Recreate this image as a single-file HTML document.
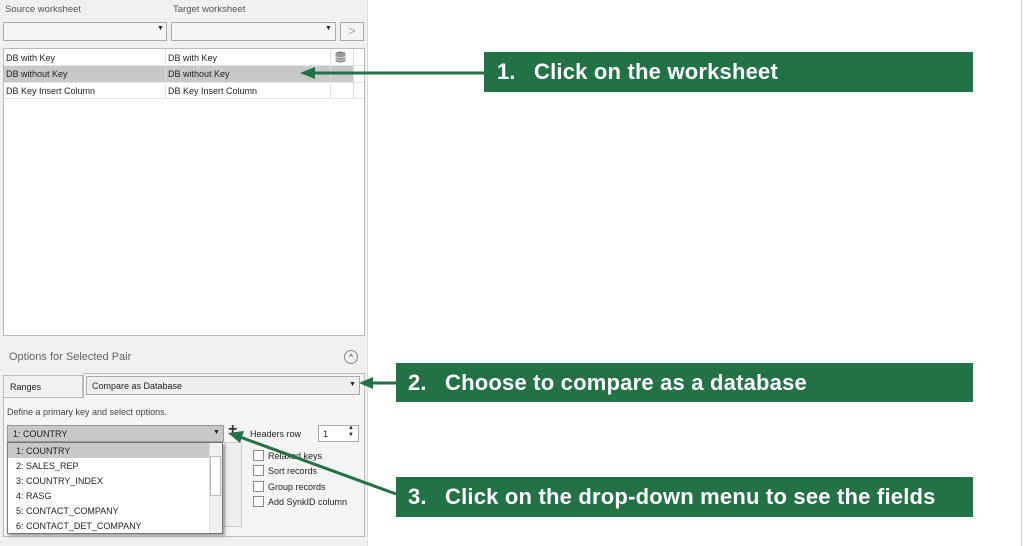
<!DOCTYPE html>
<html><head><style>
*{margin:0;padding:0;box-sizing:border-box}
body{width:1024px;height:546px;background:#fff;font-family:"Liberation Sans",sans-serif;position:relative;overflow:hidden}
.a{position:absolute}
.left{left:0;top:0;width:368px;height:546px;background:#f0f0f0;border-right:1px solid #ddd}
.lbl{font-size:9.5px;color:#555}
.box{border:1px solid #aaa;background:#f4f4f4}
.t{font-size:9px;color:#222;white-space:nowrap}
.g{background:#237245;color:#fff;font-weight:bold;font-size:22px;letter-spacing:0.2px;display:flex;align-items:center;white-space:nowrap}
.g b{display:inline-block;width:37px}
.cb{width:11px;height:11px;border:1px solid #888;background:#fff}
</style></head><body>
<div class="a left"></div>
<div class="a lbl" style="left:5px;top:4px">Source worksheet</div>
<div class="a lbl" style="left:173px;top:4px">Target worksheet</div>
<div class="a box" style="left:3px;top:22px;width:164px;height:19px"></div>
<div class="a t" style="left:157px;top:25px;font-size:7px">▼</div>
<div class="a box" style="left:171px;top:22px;width:165px;height:19px"></div>
<div class="a t" style="left:325px;top:25px;font-size:7px">▼</div>
<div class="a box" style="left:340px;top:22px;width:24px;height:19px;color:#999;font-size:12px;text-align:center;line-height:17px">&gt;</div>
<div class="a" style="left:3px;top:48px;width:362px;height:288px;background:#fff;border:1px solid #bbb"></div>
<div class="a" style="left:4px;top:66px;width:349px;height:16px;background:#c8c8c8"></div>
<div class="a" style="left:165px;top:49px;width:1px;height:50px;background:#ddd"></div>
<div class="a" style="left:330px;top:49px;width:1px;height:50px;background:#ddd"></div>
<div class="a" style="left:353px;top:49px;width:1px;height:50px;background:#ddd"></div>
<div class="a" style="left:4px;top:65px;width:360px;height:1px;background:#e4e4e4"></div>
<div class="a" style="left:4px;top:82px;width:360px;height:1px;background:#e4e4e4"></div>
<div class="a" style="left:4px;top:98px;width:360px;height:1px;background:#e4e4e4"></div>
<div class="a t" style="left:6px;top:53px">DB with Key</div>
<div class="a t" style="left:168px;top:53px">DB with Key</div>
<div class="a t" style="left:6px;top:69px">DB without Key</div>
<div class="a t" style="left:168px;top:69px">DB without Key</div>
<div class="a t" style="left:6px;top:86px">DB Key Insert Column</div>
<div class="a t" style="left:168px;top:86px">DB Key Insert Column</div>
<svg class="a" style="left:335px;top:51px" width="11" height="12"><ellipse cx="5.5" cy="2.5" rx="5" ry="2" fill="#888"/><rect x="0.5" y="2.5" width="10" height="7" fill="#999"/><ellipse cx="5.5" cy="9.5" rx="5" ry="2" fill="#888"/><path d="M0.5 5.5q5 3 10 0M0.5 8q5 3 10 0" stroke="#ddd" fill="none"/></svg>
<div class="a" style="left:9px;top:351px;font-size:11px;color:#666">Options for Selected Pair</div>
<div class="a" style="left:344px;top:350px;width:14px;height:14px;border:1px solid #888;border-radius:50%;font-size:8px;text-align:center;line-height:13px;color:#333">^</div>
<div class="a" style="left:3px;top:375px;width:80px;height:23px;border:1px solid #bbb;border-bottom:none;background:#f0f0f0"></div>
<div class="a t" style="left:10px;top:382px">Ranges</div>
<div class="a" style="left:3px;top:397px;width:362px;height:140px;border:1px solid #bbb;background:#f4f4f4"></div>
<div class="a" style="left:83px;top:373px;width:282px;height:25px;border:1px solid #bbb;background:#f4f4f4;border-bottom:none"></div>
<div class="a box" style="left:86px;top:376px;width:274px;height:19px;background:#eee"></div>
<div class="a t" style="left:92px;top:381px">Compare as Database</div>
<div class="a t" style="left:349px;top:381px;font-size:7px">▼</div>
<div class="a t" style="left:7px;top:407px;color:#444">Define a primary key and select options.</div>
<div class="a" style="left:7px;top:425px;width:217px;height:17px;background:#c8c8c8;border:1px solid #999"></div>
<div class="a t" style="left:13px;top:429px">1: COUNTRY</div>
<div class="a t" style="left:213px;top:429px;font-size:7px">▼</div>
<div class="a" style="left:228px;top:421px;font-size:16px;font-weight:bold;color:#333">+</div>
<div class="a" style="left:224px;top:442px;width:18px;height:85px;border:1px solid #ccc;background:#eee"></div>
<div class="a" style="left:7px;top:442px;width:216px;height:92px;background:#fff;border:1px solid #777;box-shadow:2px 2px 3px #999"></div>
<div class="a" style="left:8px;top:443px;width:201px;height:15px;background:#c8c8c8"></div>
<div class="a" style="left:209px;top:443px;width:13px;height:90px;background:#f0f0f0;border-left:1px solid #ddd"></div>
<div class="a" style="left:210px;top:456px;width:11px;height:40px;background:#fff;border:1px solid #bbb"></div>
<div class="a t" style="left:16px;top:446px">1: COUNTRY</div>
<div class="a t" style="left:16px;top:461px">2: SALES_REP</div>
<div class="a t" style="left:16px;top:476px">3: COUNTRY_INDEX</div>
<div class="a t" style="left:16px;top:491px">4: RASG</div>
<div class="a t" style="left:16px;top:506px">5: CONTACT_COMPANY</div>
<div class="a t" style="left:16px;top:521px">6: CONTACT_DET_COMPANY</div>
<div class="a t" style="left:250px;top:429px">Headers row</div>
<div class="a" style="left:318px;top:425px;width:41px;height:17px;background:#fff;border:1px solid #aaa"></div>
<div class="a t" style="left:323px;top:429px">1</div>
<div class="a t" style="left:348px;top:425px;font-size:6px;line-height:7px">▲<br>▼</div>
<div class="a cb" style="left:253px;top:450px"></div><div class="a t" style="left:268px;top:451px">Relaxed keys</div>
<div class="a cb" style="left:253px;top:465px"></div><div class="a t" style="left:268px;top:466px">Sort records</div>
<div class="a cb" style="left:253px;top:481px"></div><div class="a t" style="left:268px;top:482px">Group records</div>
<div class="a cb" style="left:253px;top:496px"></div><div class="a t" style="left:268px;top:497px">Add SynkID column</div>
<div class="a" style="left:1021px;top:0;width:1px;height:546px;background:#ccc"></div>
<div class="a g" style="left:484px;top:52px;width:489px;height:40px;padding-left:13px"><b>1.</b>Click on the worksheet</div>
<div class="a g" style="left:396px;top:363px;width:577px;height:39px;padding-left:12px"><b>2.</b>Choose to compare as a database</div>
<div class="a g" style="left:396px;top:477px;width:577px;height:40px;padding-left:12px"><b>3.</b>Click on the drop-down menu to see the fields</div>
<svg class="a" style="left:0;top:0" width="1024" height="546">
<g stroke="#237245" stroke-width="3" fill="#237245">
<line x1="484" y1="73" x2="312" y2="73"/><polygon points="300,73 315,67 315,79" stroke="none"/>
<line x1="396" y1="383" x2="370" y2="383"/><polygon points="359,383 373,377 373,389" stroke="none"/>
<line x1="396" y1="494" x2="240" y2="437"/><polygon points="228,433 244,431 240,443" stroke="none"/>
</g></svg>
</body></html>
